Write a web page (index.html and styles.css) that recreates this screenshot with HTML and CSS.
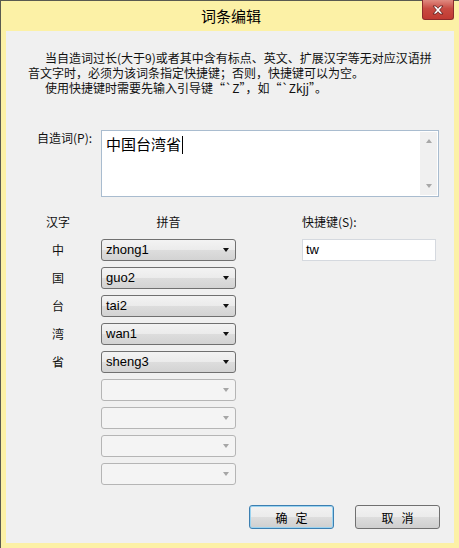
FILE: index.html
```html
<!DOCTYPE html>
<html lang="zh-CN">
<head>
<meta charset="utf-8">
<title>词条编辑</title>
<link rel="stylesheet" href="styles.css">
</head>
<body>
<div class="window">
  <div class="titlebar">
    <span class="title">词条编辑</span>
    <div class="close">
      <svg width="14" height="10" viewBox="0 0 14 10">
        <path d="M2 1 L5 1 L7 3.3 L9 1 L12 1 L8.6 5 L12 9 L9 9 L7 6.7 L5 9 L2 9 L5.4 5 Z" fill="#fff" stroke="#5a1a1a" stroke-width="0.8" stroke-linejoin="round"/>
      </svg>
    </div>
  </div>
  <div class="client">
    <div class="desc">
      <p class="para">当自造词过长(大于9)或者其中含有标点、英文、扩展汉字等无对应汉语拼<br>音文字时，必须为该词条指定快捷键；否则，快捷键可以为空。</p>
      <p class="para">使用快捷键时需要先输入引导键“`Z”，如“`Zkjj”。</p>
    </div>
    <div class="word-row">
      <label class="word-label">自造词(P):</label>
      <div class="textarea">
        <div class="ta-text">中国台湾省<span class="caret"></span></div>
        <div class="scrollbar">
          <span class="arrow-up"></span>
          <span class="arrow-down"></span>
        </div>
      </div>
    </div>
    <div class="grid">
      <div class="head c1">汉字</div>
      <div class="head c2">拼音</div>
      <div class="head c3">快捷键(S):</div>

      <div class="ch c1">中</div>
      <div class="select c2"><span class="val">zhong1</span><span class="tri"></span></div>
      <div class="input c3">tw</div>

      <div class="ch c1">国</div>
      <div class="select c2"><span class="val">guo2</span><span class="tri"></span></div>

      <div class="ch c1">台</div>
      <div class="select c2"><span class="val">tai2</span><span class="tri"></span></div>

      <div class="ch c1">湾</div>
      <div class="select c2"><span class="val">wan1</span><span class="tri"></span></div>

      <div class="ch c1">省</div>
      <div class="select c2"><span class="val">sheng3</span><span class="tri"></span></div>

      <div class="select disabled c2"><span class="val"></span><span class="tri"></span></div>
      <div class="select disabled c2"><span class="val"></span><span class="tri"></span></div>
      <div class="select disabled c2"><span class="val"></span><span class="tri"></span></div>
      <div class="select disabled c2"><span class="val"></span><span class="tri"></span></div>
    </div>
    <div class="buttons">
      <div class="btn default"><span>确</span><span>定</span></div>
      <div class="btn"><span>取</span><span>消</span></div>
    </div>
  </div>
</div>
</body>
</html>
```

FILE: styles.css
```css
html, body {
  margin: 0;
  padding: 0;
  background: #fcf1a6;
}
body {
  font-family: "Liberation Sans", "Noto Sans CJK SC", sans-serif;
  font-size: 12px;
  color: #111;
}
.window {
  position: relative;
  width: 459px;
  height: 548px;
  box-sizing: border-box;
  border-top: 1px solid #5a5a50;
  border-left: 1px solid #5a5a50;
  background: #fcf1a6;
}
.titlebar {
  height: 30px;
  display: flex;
  align-items: center;
  justify-content: center;
}
.title {
  font-family: "Noto Sans CJK SC", sans-serif;
  font-size: 15px;
  line-height: 20px;
  color: #000;
  margin-left: 2px;
}
.close {
  position: absolute;
  left: 421px;
  top: -1px;
  width: 32px;
  height: 20px;
  box-sizing: border-box;
  border: 1px solid #8c2c2c;
  border-top: none;
  border-radius: 0 0 3px 3px;
  background: linear-gradient(#e08a80, #c84b42 45%, #c13a32);
  display: flex;
  align-items: center;
  justify-content: center;
}
.client {
  margin-left: 5px;
  width: 448px;
  height: 512px;
  background: #f0f0f0;
  box-sizing: border-box;
  padding-top: 19px;
}
.desc {
  padding-left: 22px;
  white-space: nowrap;
}
.para {
  margin: 0;
  text-indent: 17px;
  line-height: 15px;
  font-size: 12px;
  font-family: "Noto Sans CJK SC", sans-serif;
}
.word-row {
  display: flex;
  margin-top: 35px;
  padding-left: 31px;
}
.word-label {
  width: 64px;
  line-height: 16px;
  font-family: "Noto Sans CJK SC", sans-serif;
}
.textarea {
  width: 338px;
  height: 67px;
  box-sizing: border-box;
  border: 1px solid #a9bccf;
  background: #fff;
  display: flex;
  justify-content: space-between;
}
.ta-text {
  padding: 3px 0 0 4px;
  font-family: "Noto Sans CJK SC", sans-serif;
  font-size: 15px;
  line-height: 20px;
  color: #000;
  display: flex;
  align-items: flex-start;
}
.caret {
  display: inline-block;
  width: 1px;
  height: 18px;
  margin-top: 2px;
  margin-left: 1px;
  background: #000;
}
.scrollbar {
  width: 17px;
  margin: 1px 1px 1px 0;
  background: #f0f0f0;
  display: flex;
  flex-direction: column;
  justify-content: space-between;
  align-items: center;
  padding: 7px 0;
  box-sizing: border-box;
}
.arrow-up {
  width: 0;
  height: 0;
  border-left: 3.5px solid transparent;
  border-right: 3.5px solid transparent;
  border-bottom: 4px solid #a8a8a8;
}
.arrow-down {
  width: 0;
  height: 0;
  border-left: 3.5px solid transparent;
  border-right: 3.5px solid transparent;
  border-top: 4px solid #a8a8a8;
}
.grid {
  display: grid;
  margin-top: 17px;
  padding-left: 34px;
  grid-template-columns: 36px 135px 134px;
  column-gap: 25px;
  grid-template-rows: 19px repeat(9, 22px);
  row-gap: 6px;
}
.grid > .c1 { grid-column: 1; }
.grid > .c2 { grid-column: 2; }
.grid > .c3 { grid-column: 3; margin-left: 41px; }
.head {
  align-self: start;
  line-height: 16px;
  font-family: "Noto Sans CJK SC", sans-serif;
  text-align: center;
}
.head.c3 {
  text-align: left;
}
.ch {
  align-self: center;
  text-align: center;
  font-family: "Noto Sans CJK SC", sans-serif;
  line-height: 16px;
}
.select {
  box-sizing: border-box;
  height: 22px;
  border: 1px solid #707070;
  border-radius: 3px;
  background: linear-gradient(#f3f3f3, #ebebeb 50%, #dddddd 51%, #d3d3d3);
  display: flex;
  align-items: center;
  justify-content: space-between;
  padding: 0 6px 0 4px;
}
.select .val {
  font-family: "Liberation Sans", sans-serif;
  font-size: 13px;
  color: #000;
  line-height: 16px;
}
.tri {
  width: 0;
  height: 0;
  border-left: 3.5px solid transparent;
  border-right: 3.5px solid transparent;
  border-top: 4px solid #111;
}
.select.disabled {
  border-color: #b5b5b5;
  background: #f4f4f4;
}
.select.disabled .tri {
  border-top-color: #a6a6a6;
}
.input {
  box-sizing: border-box;
  height: 22px;
  border: 1px solid #d5d9df;
  background: #fff;
  padding: 0 3px;
  line-height: 20px;
  font-family: "Liberation Sans", sans-serif;
  font-size: 13px;
  color: #000;
  width: 134px;
}
.buttons {
  display: flex;
  justify-content: flex-end;
  gap: 21px;
  margin-top: 20px;
  padding-right: 14px;
}
.btn {
  width: 85px;
  height: 24px;
  box-sizing: border-box;
  border: 1px solid #707070;
  border-radius: 3px;
  background: linear-gradient(#f2f2f2, #ebebeb 50%, #dddddd 51%, #cfcfcf);
  display: flex;
  align-items: center;
  justify-content: center;
  gap: 8px;
  font-family: "Noto Sans CJK SC", sans-serif;
  font-size: 12px;
  color: #000;
}
.btn.default {
  border-color: #3c7fb1;
  box-shadow: inset 0 0 0 1px #9bd3f0;
}
```
